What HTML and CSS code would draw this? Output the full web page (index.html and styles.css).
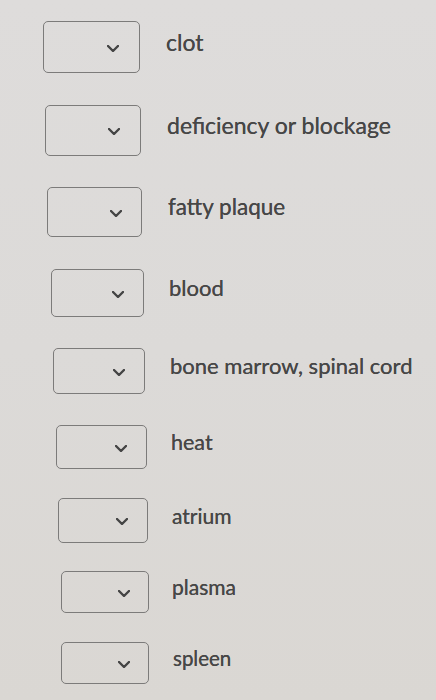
FILE: index.html
```html
<!DOCTYPE html>
<html>
<head>
<meta charset="utf-8">
<link rel="stylesheet" href="styles.css">
</head>
<body>
<div class="list">
  <div class="row r1"><div class="select"><svg class="chev" viewBox="0 0 12 7"><path d="M1 1 L6 6 L11 1"/></svg></div><span class="label">clot</span></div>
  <div class="row r2"><div class="select"><svg class="chev" viewBox="0 0 12 7"><path d="M1 1 L6 6 L11 1"/></svg></div><span class="label">deficiency or blockage</span></div>
  <div class="row r3"><div class="select"><svg class="chev" viewBox="0 0 12 7"><path d="M1 1 L6 6 L11 1"/></svg></div><span class="label">fatty plaque</span></div>
  <div class="row r4"><div class="select"><svg class="chev" viewBox="0 0 12 7"><path d="M1 1 L6 6 L11 1"/></svg></div><span class="label">blood</span></div>
  <div class="row r5"><div class="select"><svg class="chev" viewBox="0 0 12 7"><path d="M1 1 L6 6 L11 1"/></svg></div><span class="label">bone marrow, spinal cord</span></div>
  <div class="row r6"><div class="select"><svg class="chev" viewBox="0 0 12 7"><path d="M1 1 L6 6 L11 1"/></svg></div><span class="label">heat</span></div>
  <div class="row r7"><div class="select"><svg class="chev" viewBox="0 0 12 7"><path d="M1 1 L6 6 L11 1"/></svg></div><span class="label">atrium</span></div>
  <div class="row r8"><div class="select"><svg class="chev" viewBox="0 0 12 7"><path d="M1 1 L6 6 L11 1"/></svg></div><span class="label">plasma</span></div>
  <div class="row r9"><div class="select"><svg class="chev" viewBox="0 0 12 7"><path d="M1 1 L6 6 L11 1"/></svg></div><span class="label">spleen</span></div>
</div>
</body>
</html>
```

FILE: styles.css
```css
html, body {
  margin: 0;
  padding: 0;
}
body {
  width: 436px;
  height: 700px;
  overflow: hidden;
  background: linear-gradient(180deg, #dedcdb 0%, #dcdad8 50%, #dad7d3 100%);
  font-family: Lato, "Open Sans", sans-serif;
  color: #474747;
}
.list {
  display: flex;
  flex-direction: column;
  padding-top: 21px;
}
.row {
  display: flex;
  align-items: center;
  margin-left: var(--x);
  margin-top: var(--mt);
}
.select {
  box-sizing: border-box;
  width: var(--w);
  height: var(--h);
  border: 1.5px solid #7c7b7a;
  border-radius: 5px;
  display: flex;
  justify-content: flex-end;
  align-items: center;
  padding-right: var(--cr);
  padding-top: 2px;
}
.chev {
  width: 12px;
  height: 7px;
  fill: none;
  stroke: #444;
  stroke-width: 2.4;
  stroke-linecap: round;
  stroke-linejoin: round;
}
.label {
  margin-left: var(--g);
  font-size: var(--fs);
  margin-bottom: 11px;
  white-space: nowrap;
  text-shadow: 0 0 0.4px #474747;
}
.r1 { --x: 43px; --mt: 0px;  --w: 97px; --h: 52px; --g: 26px; --fs: 23px; --cr: 20px; }
.r2 { --x: 45px; --mt: 32px; --w: 96px; --h: 51px; --g: 26px; --fs: 23px; --cr: 20px; }
.r3 { --x: 47px; --mt: 31px; --w: 95px; --h: 50px; --g: 26px; --fs: 22.5px; --cr: 19px; }
.r4 { --x: 51px; --mt: 32px; --w: 93px; --h: 48px; --g: 25px; --fs: 22px; --cr: 19px; }
.r5 { --x: 53px; --mt: 31px; --w: 92px; --h: 46px; --g: 25px; --fs: 22px; --cr: 19px; }
.r6 { --x: 56px; --mt: 31px; --w: 91px; --h: 44px; --g: 24px; --fs: 21.5px; --cr: 19px; }
.r7 { --x: 58px; --mt: 29px; --w: 90px; --h: 45px; --g: 24px; --fs: 21px; --cr: 19px; }
.r8 { --x: 61px; --mt: 28px; --w: 88px; --h: 42px; --g: 23px; --fs: 21px; --cr: 18px; }
.r9 { --x: 61px; --mt: 29px; --w: 88px; --h: 42px; --g: 24px; --fs: 20.5px; --cr: 18px; }
```
